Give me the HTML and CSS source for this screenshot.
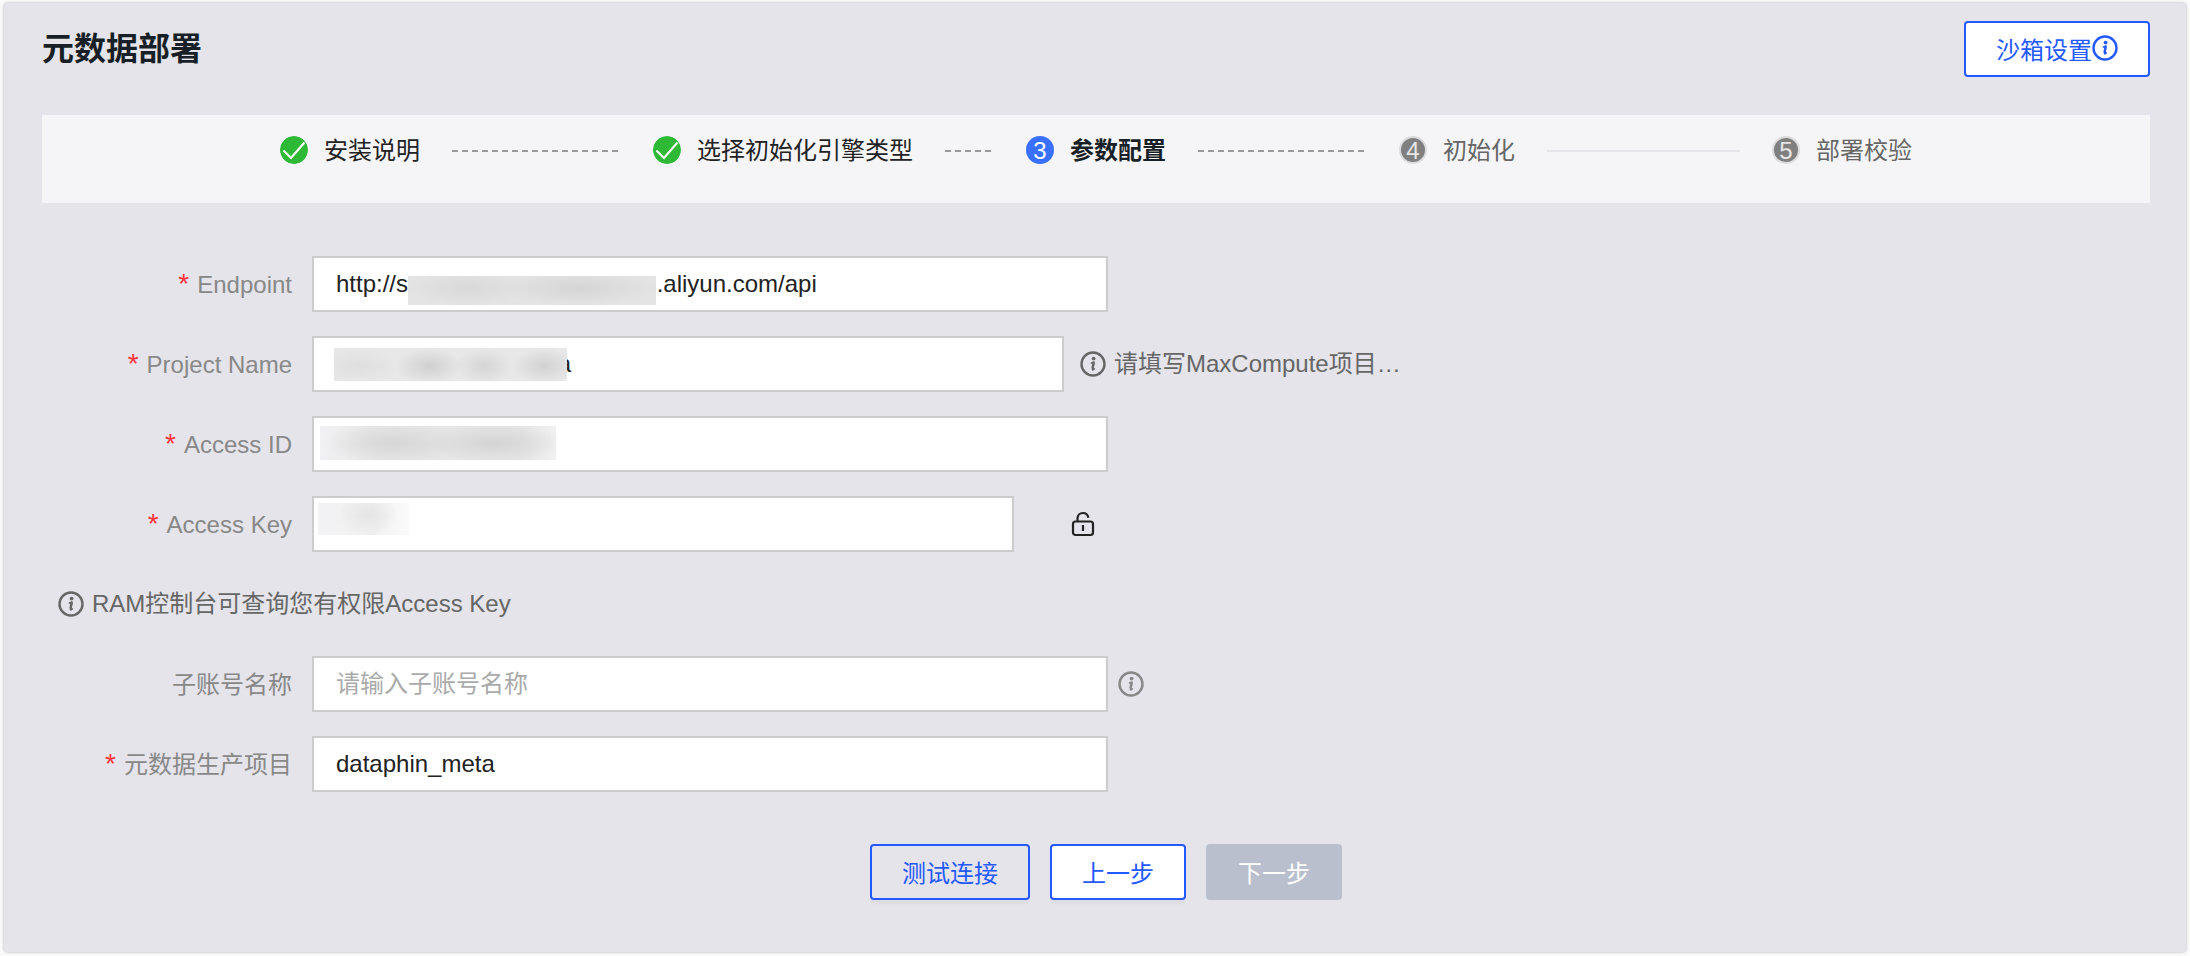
FILE: index.html
```html
<!DOCTYPE html>
<html lang="zh-CN">

<head>
    <meta charset="UTF-8">
    <meta name="viewport" content="width=device-width, initial-scale=1.0">
    <title>元数据部署</title>
    <link rel="stylesheet" href="styles.css">
</head>

<body>
    <svg class="defs" aria-hidden="true">
        <symbol id="icon-info" viewBox="0 0 26 26">
            <circle cx="13" cy="13" r="11.5" fill="none" stroke="currentColor" stroke-width="2.4" />
            <circle cx="13.6" cy="7.6" r="1.9" fill="currentColor" />
            <path d="M11.4 11.9l2.6-.9-1.5 7.2c-.1.7.3.9.8.5l1-.8" fill="none" stroke="currentColor" stroke-width="1.6" stroke-linejoin="round" stroke-linecap="round" />
            <path d="M13.7 11.6l-1.2 6" fill="none" stroke="currentColor" stroke-width="2.4" />
        </symbol>
        <symbol id="icon-check" viewBox="0 0 28 28">
            <circle cx="14" cy="14" r="14" fill="#2db835" />
            <path d="M3.5 14.5l7.5 7.5L24.5 6.5" fill="none" stroke="#fff" stroke-width="2.2" />
        </symbol>
    </svg>

    <main class="panel">
        <header class="header">
            <h1>元数据部署</h1>
            <button type="button" class="btn">沙箱设置<svg class="icon"><use href="#icon-info" /></svg></button>
        </header>

        <ol class="steps">
            <li class="step done">
                <svg class="step-icon"><use href="#icon-check" /></svg>
                <span class="step-title">安装说明</span>
                <span class="step-line"></span>
            </li>
            <li class="step done">
                <svg class="step-icon"><use href="#icon-check" /></svg>
                <span class="step-title">选择初始化引擎类型</span>
                <span class="step-line"></span>
            </li>
            <li class="step active">
                <span class="step-icon">3</span>
                <span class="step-title">参数配置</span>
                <span class="step-line"></span>
            </li>
            <li class="step wait">
                <span class="step-icon">4</span>
                <span class="step-title">初始化</span>
                <span class="step-line"></span>
            </li>
            <li class="step wait">
                <span class="step-icon">5</span>
                <span class="step-title">部署校验</span>
            </li>
        </ol>

        <form>
            <div class="form-row">
                <label for="endpoint" class="required">Endpoint</label>
                <div class="field">
                    <input type="text" id="endpoint" value="http://s••••••••••••••••••••••••••••e.aliyun.com/api">
                    <span class="mask mask-endpoint"></span>
                </div>
            </div>
            <div class="form-row">
                <label for="project" class="required">Project Name</label>
                <div class="field field-project">
                    <input type="text" id="project" value="••••••••••••••••••••••••   a">
                    <span class="mask mask-project"></span>
                </div>
                <span class="tip"><svg class="icon"><use href="#icon-info" /></svg>请填写MaxCompute项目…</span>
            </div>
            <div class="form-row">
                <label for="accessId" class="required">Access ID</label>
                <div class="field">
                    <input type="text" id="accessId">
                    <span class="mask mask-id"></span>
                </div>
            </div>
            <div class="form-row">
                <label for="accessKey" class="required">Access Key</label>
                <div class="field field-key">
                    <input type="password" id="accessKey">
                    <span class="mask mask-key"></span>
                </div>
                <button type="button" class="lock" aria-label="显示">
                    <svg width="24" height="26" viewBox="0 0 24 26" fill="none" stroke="#222" stroke-width="2.2">
                        <rect x="2" y="10.5" width="20" height="13.5" rx="2.5" />
                        <path d="M6.5 10V7.5c0-3.2 2.4-5.5 5.5-5.5 2.8 0 4.9 1.8 5.4 4.8M12 14v6" />
                    </svg>
                </button>
            </div>
            <p class="note"><svg class="icon"><use href="#icon-info" /></svg>RAM控制台可查询您有权限Access Key</p>
            <div class="form-row">
                <label for="subAccount">子账号名称</label>
                <div class="field">
                    <input type="text" id="subAccount" placeholder="请输入子账号名称">
                </div>
                <svg class="icon help"><use href="#icon-info" /></svg>
            </div>
            <div class="form-row">
                <label for="metaProject" class="required">元数据生产项目</label>
                <div class="field">
                    <input type="text" id="metaProject" value="dataphin_meta">
                </div>
            </div>

            <div class="actions">
                <button type="button" class="btn btn-ghost">测试连接</button>
                <button type="button" class="btn">上一步</button>
                <button type="submit" class="btn" disabled>下一步</button>
            </div>
        </form>
    </main>
</body>

</html>
```
FILE: styles.css
```css
* {
    box-sizing: border-box;
}

body {
    margin: 0;
    padding: 3px 4px 4px;
    background-color: #fafafa;
    color: #222;
    font-family: "Liberation Sans", "Noto Sans CJK SC", sans-serif;
    font-size: 24px;
    line-height: 32px;
}

.defs {
    display: none;
}

.panel {
    min-height: calc(100vh - 7px);
    padding: 18px 36px 52px 38px;
    background-color: #e4e4ea;
    border-radius: 4px;
    box-shadow: 0 0 3px rgba(0, 0, 0, 0.3);
}

.icon {
    flex: none;
    width: 26px;
    height: 26px;
}

.header {
    display: flex;
    justify-content: space-between;
    align-items: center;
    margin-bottom: 38px;
}

.header h1 {
    margin: 0;
    font-size: 32px;
    line-height: 40px;
    color: #181f26;
}

.btn {
    display: inline-flex;
    align-items: center;
    height: 56px;
    padding: 0 30px 2px;
    border: 2px solid #2459ff;
    border-radius: 4px;
    background-color: #fff;
    color: #2459ff;
    font-family: inherit;
    font-size: 24px;
    cursor: pointer;
}

.btn-ghost {
    background-color: transparent;
}

.btn:disabled {
    border-color: #babfcd;
    background-color: #babfcd;
    color: #fff;
    cursor: not-allowed;
}

/* steps */
.steps {
    display: flex;
    justify-content: center;
    height: 88px;
    margin: 0 0 53px;
    padding: 19px 0 0;
    background-color: #f5f5f8;
    list-style: none;
}

.step {
    display: flex;
    align-items: center;
    width: 373px;
    height: 32px;
}

.step:last-child {
    width: auto;
}

.step-icon {
    flex: none;
    width: 28px;
    height: 28px;
    margin-right: 16px;
    border-radius: 50%;
    font-size: 24px;
    line-height: 30px;
    text-align: center;
}

.step-title {
    padding-top: 2px;
    white-space: nowrap;
}

.step-line {
    flex: 1;
    height: 2px;
    margin: 2px 35px 0 32px;
    background: repeating-linear-gradient(to right, #999 0 6px, transparent 6px 10px);
}

.active .step-icon {
    background-color: #3a70ff;
    color: #fff;
}

.active .step-title {
    font-weight: bold;
    color: #181f26;
}

.wait .step-icon {
    border: 2px solid #dcdcdf;
    background-color: #808080;
    color: #e6e6e6;
    line-height: 26px;
}

.wait .step-title {
    color: #666;
}

.wait .step-line {
    margin-right: 32px;
    background: #e6e6ea;
}

/* form */
.form-row,
.note {
    display: flex;
    align-items: center;
    height: 56px;
    margin: 0 0 24px;
}

.form-row label {
    flex: none;
    width: 270px;
    padding: 2px 20px 0 0;
    text-align: right;
    color: #888;
}

.required::before {
    content: "*";
    margin-right: 8px;
    color: #ff3340;
    font-size: 28px;
    line-height: 24px;
}

.field {
    position: relative;
    width: 796px;
}

.field-project {
    width: 752px;
}

.field-key {
    width: 702px;
}

.field input {
    display: block;
    width: 100%;
    height: 56px;
    padding: 0 22px;
    border: 2px solid #ccc;
    border-radius: 0;
    outline: none;
    background-color: #fff;
    color: #222;
    font-family: inherit;
    font-size: 24px;
}

.field input::placeholder {
    color: #aaa;
}

/* blurred patches over private values */
.mask {
    position: absolute;
    pointer-events: none;
}

.mask-endpoint {
    top: 20px;
    left: 96px;
    width: 248px;
    height: 29px;
    background:
        radial-gradient(ellipse 60px 18px at 60px 12px, #d8d8d8, transparent),
        radial-gradient(ellipse 80px 18px at 170px 12px, #d5d5d5, transparent),
        #e4e4e4;
}

.mask-project {
    top: 12px;
    left: 22px;
    width: 233px;
    height: 33px;
    background:
        radial-gradient(ellipse 40px 18px at 25px 18px, #dedede, transparent),
        radial-gradient(ellipse 34px 18px at 95px 18px, #d0d0d0, transparent),
        radial-gradient(ellipse 30px 18px at 150px 18px, #d5d5d5, transparent),
        radial-gradient(ellipse 32px 18px at 210px 18px, #d2d2d2, transparent),
        #e8e8e8;
}

.mask-id {
    top: 10px;
    left: 8px;
    width: 236px;
    height: 34px;
    background:
        radial-gradient(ellipse 70px 20px at 75px 17px, #d6d6d6, transparent),
        radial-gradient(ellipse 70px 20px at 175px 17px, #d4d4d4, transparent),
        linear-gradient(to right, #f1f1f3, #e6e6e6 25%, #e6e6e6 85%, #f1f1f1);
}

.mask-key {
    top: 7px;
    left: 6px;
    width: 91px;
    height: 32px;
    background:
        radial-gradient(ellipse 30px 20px at 50px 12px, #e4e4e4, transparent),
        linear-gradient(to right, #f3f3f5, #f0f0f0 60%, #fbfbfb);
}

.tip,
.note {
    display: flex;
    align-items: center;
    gap: 8px;
    color: #666;
}

.tip {
    margin-left: 16px;
}

.note {
    padding-left: 16px;
}

.lock {
    display: flex;
    margin-left: 57px;
    padding: 0;
    border: none;
    background: none;
    cursor: pointer;
}

.help {
    margin-left: 10px;
    color: #888;
}

.actions {
    display: flex;
    justify-content: center;
    margin-top: 52px;
}

.actions .btn {
    margin-left: 20px;
    box-shadow: 0 4px 2px rgba(0, 0, 0, 0.03);
}

.actions .btn:disabled {
    box-shadow: none;
}
```
